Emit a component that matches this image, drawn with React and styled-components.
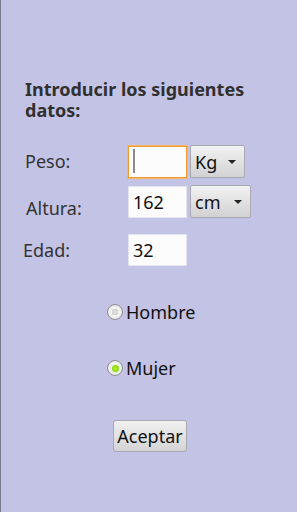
import React from 'react';
import styled, { createGlobalStyle, css } from 'styled-components';

const FONT = '"Noto Sans", "Open Sans", "DejaVu Sans", sans-serif';

const GlobalStyle = createGlobalStyle`
  body {
    margin: 0;
    background: #c3c3e5;
    font-family: ${FONT};
  }
`;

const Page = styled.main`
  box-sizing: border-box;
  min-height: 512px;
  border-left: 1px solid #7c7c88;
  background: #c3c3e5;
  padding: 79px 20px 0 24px;
  display: flex;
  flex-direction: column;
`;

const Title = styled.h1`
  margin: 0;
  font-size: 18px;
  line-height: 21px;
  font-weight: 700;
  color: #303030;
`;

const Form = styled.div`
  display: flex;
  flex-direction: column;
  margin-top: 24px;
`;

const Row = styled.div`
  display: flex;
  align-items: center;
  margin-top: ${p => p.$top || 0}px;
`;

const Label = styled.span`
  box-sizing: border-box;
  flex: 0 0 ${p => 103 - (p.$indent || 0)}px;
  margin-left: ${p => p.$indent || 0}px;
  padding-top: ${p => p.$drop || 0}px;
  font-size: 18px;
  line-height: 21px;
  color: #333;
`;

const FieldBox = styled.div`
  position: relative;
  box-sizing: border-box;
  width: 59px;
  height: 32px;
  background: #fcfcfc;
  border: 1px solid #e4e4ee;
  ${p => p.$focused && css`
    border: 1px solid #f39a2e;
    outline: 1px solid #f7b665;
    &::after {
      content: '';
      position: absolute;
      left: 4px;
      top: 2px;
      width: 2px;
      height: 24px;
      background: #8c8c8c;
    }
  `}
`;

const Input = styled.input`
  box-sizing: border-box;
  width: 100%;
  height: 100%;
  border: none;
  background: transparent;
  padding: 0 0 0 4px;
  font-family: ${FONT};
  font-size: 18px;
  color: #111;
  outline: none;
`;

const Spinner = styled.div`
  box-sizing: border-box;
  width: ${p => p.$width}px;
  height: 33px;
  margin-left: 3px;
  display: flex;
  align-items: center;
  padding-left: 4px;
  border: 1px solid #a9a9b2;
  border-radius: 2px;
  background: linear-gradient(#f2f2f2, #d2d2d4);
  font-size: 18px;
  color: #111;
`;

const Arrow = styled.span`
  margin-left: auto;
  margin-right: 8px;
  width: 0;
  height: 0;
  border-left: 4px solid transparent;
  border-right: 4px solid transparent;
  border-top: 4px solid #222;
`;

const RadioGroup = styled.div`
  display: flex;
  flex-direction: column;
  gap: 24px;
  margin: 30px 0 0 82px;
`;

const RadioItem = styled.label`
  display: flex;
  align-items: center;
  gap: 3px;
  height: 32px;
  font-size: 18px;
  color: #111;
`;

const RadioDot = styled.span`
  box-sizing: border-box;
  width: 16px;
  height: 16px;
  border-radius: 50%;
  border: 1px solid #8e8e94;
  background: radial-gradient(circle, #f6f6f6 40%, #d6d6da 100%);
  display: flex;
  align-items: center;
  justify-content: center;

  &::after {
    content: '';
    width: ${p => (p.$checked ? 7 : 6)}px;
    height: ${p => (p.$checked ? 7 : 6)}px;
    border-radius: 50%;
    background: ${p => (p.$checked ? 'radial-gradient(circle, #b2f23a, #7cc400)' : '#dcdcdc')};
    box-shadow: ${p => (p.$checked ? '0 0 2px #c8f070' : 'inset 0 0 1px #999')};
  }
`;

const Button = styled.button`
  box-sizing: border-box;
  width: 74px;
  height: 32px;
  margin: 36px 0 0 88px;
  padding: 0;
  border: 1px solid #a8a8b0;
  border-radius: 3px;
  background: linear-gradient(#f0f0f0, #d4d4d6);
  font-family: ${FONT};
  font-size: 18px;
  color: #111;
`;

const fields = [
  { label: 'Peso:', value: '', unit: 'Kg', unitWidth: 55, focused: true, top: 0, indent: 0, drop: 0 },
  { label: 'Altura:', value: '162', unit: 'cm', unitWidth: 61, top: 6, indent: 1, drop: 14 },
  { label: 'Edad:', value: '32', top: 15, indent: -2, drop: 0 },
];

export default function App() {
  return (
    <>
      <GlobalStyle />
      <Page>
        <Title>Introducir los siguientes datos:</Title>
        <Form>
          {fields.map(f => (
            <Row key={f.label} $top={f.top}>
              <Label $indent={f.indent} $drop={f.drop}>{f.label}</Label>
              <FieldBox $focused={f.focused}>
                <Input defaultValue={f.value} readOnly />
              </FieldBox>
              {f.unit && (
                <Spinner $width={f.unitWidth}>
                  {f.unit}
                  <Arrow />
                </Spinner>
              )}
            </Row>
          ))}
        </Form>
        <RadioGroup>
          <RadioItem><RadioDot />Hombre</RadioItem>
          <RadioItem><RadioDot $checked />Mujer</RadioItem>
        </RadioGroup>
        <Button>Aceptar</Button>
      </Page>
    </>
  );
}
